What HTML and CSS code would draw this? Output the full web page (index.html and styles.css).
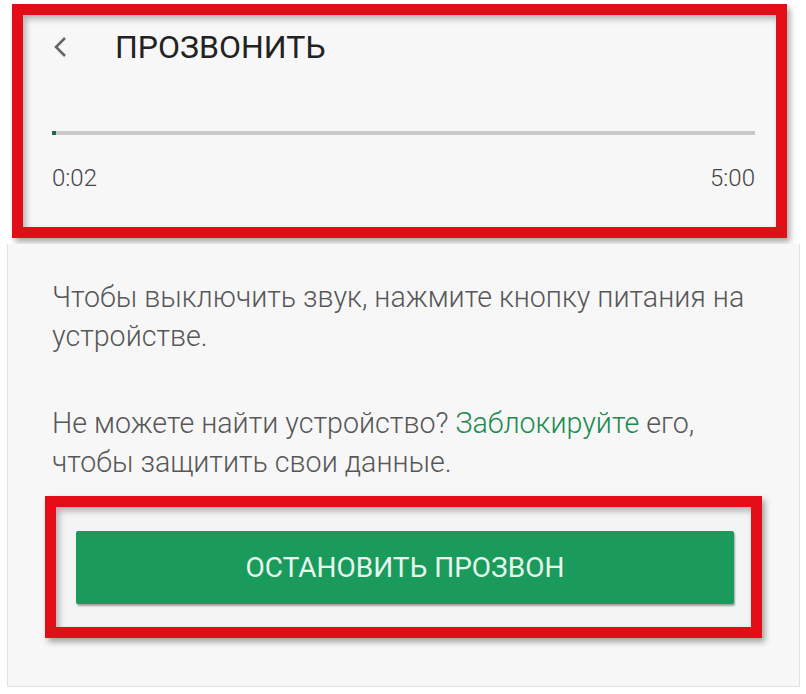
FILE: index.html
```html
<!DOCTYPE html>
<html lang="ru">
<head>
  <meta charset="UTF-8">
  <meta name="viewport" content="width=device-width, initial-scale=1.0">
  <title>Прозвонить</title>
  <link rel="stylesheet" href="styles.css">
</head>
<body>
  <div class="header mark">
    <div class="top-row">
      <svg class="back" width="14" height="22" viewBox="0 0 14 22">
        <polyline points="12,2 3,11 12,20" fill="none" stroke="#666" stroke-width="2.6"/>
      </svg>
      <h1 class="title">ПРОЗВОНИТЬ</h1>
    </div>
    <div class="progress"><div class="progress-fill"></div></div>
    <div class="times">
      <span>0:02</span>
      <span>5:00</span>
    </div>
  </div>

  <div class="card">
    <p class="text">Чтобы выключить звук, нажмите кнопку питания на устройстве.</p>
    <p class="text second">Не можете найти устройство? <span class="link">Заблокируйте</span> его, чтобы защитить свои данные.</p>
    <div class="button-box mark">
      <button class="stop">ОСТАНОВИТЬ ПРОЗВОН</button>
    </div>
  </div>
</body>
</html>
```

FILE: styles.css
```css
body {
  margin: 0;
  background-color: #ffffff;
  font-family: Roboto, "Liberation Sans", sans-serif;
  color: #555555;
}
.mark {
  border: 11px solid #e20d17;
  box-shadow: 3px 4px 6px rgba(0, 0, 0, 0.35), inset 3px 4px 6px rgba(0, 0, 0, 0.28);
}
.header {
  margin: 4px 19px 0 12px;
  padding: 12px 21px 35px 29px;
  background-color: #f7f7f7;
}
.top-row {
  display: flex;
  align-items: center;
  height: 40px;
}
.back {
  margin-left: 1px;
  margin-right: 48px;
}
.title {
  margin: 0;
  font-size: 32px;
  font-weight: 400;
  line-height: 40px;
  color: #222222;
}
.progress {
  margin-top: 64px;
  height: 4px;
  background-color: #c9c9c9;
}
.progress-fill {
  width: 4px;
  height: 4px;
  background-color: #1d6b4b;
}
.times {
  display: flex;
  justify-content: space-between;
  margin-top: 29px;
  font-size: 24px;
  font-weight: 300;
  line-height: 28px;
  color: #444444;
}
.card {
  margin: 6px 6px 6px 7px;
  padding: 34px 37px 48px 37px;
  background-color: #f7f7f7;
  border: 1px solid #e2e2e2;
  border-top: none;
}
.text {
  margin: 0 0 0 7px;
  font-size: 28.6px;
  font-weight: 300;
  line-height: 39px;
  color: #575757;
}
.text.second {
  margin-top: 48px;
}
.link {
  color: #1b8a4f;
}
.button-box {
  box-sizing: border-box;
  width: 717px;
  margin-top: 14px;
  padding: 24px 17px 23px 20px;
  background-color: #f4f4f4;
}
.stop {
  display: block;
  width: 100%;
  height: 73px;
  border: none;
  border-radius: 2px;
  background-color: #1a9b5b;
  color: #e6f6ee;
  font-family: Roboto, "Liberation Sans", sans-serif;
  font-size: 28px;
  font-weight: 400;
  box-shadow: 1px 2px 2px rgba(0, 0, 0, 0.35);
}
```
